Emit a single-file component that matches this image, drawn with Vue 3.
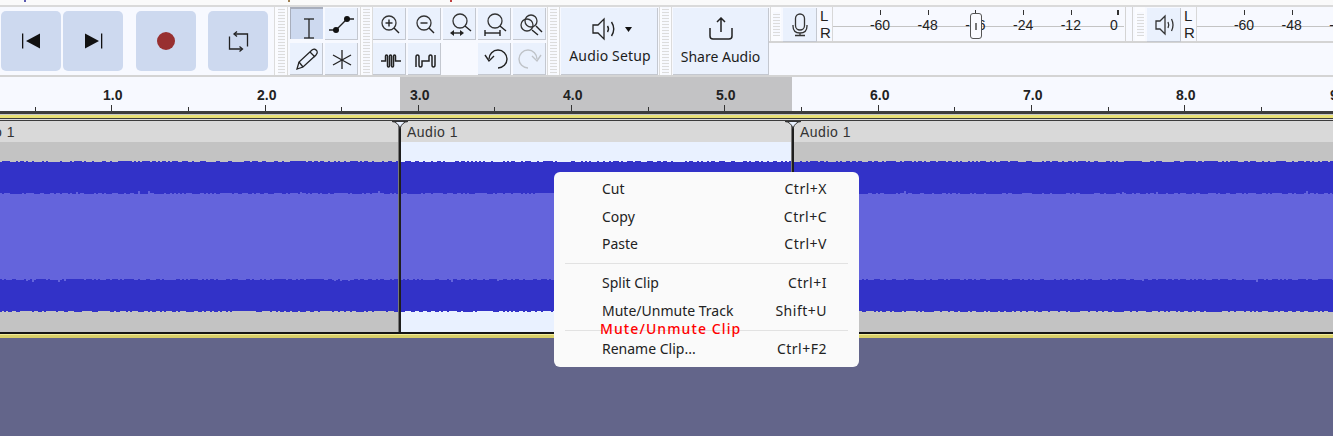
<template>
  <div class="editor">
    <div class="top-strip">
      <i v-for="m in topMarks" :key="m.x" :style="{ left: m.x + 'px', background: m.c }"></i>
    </div>

    <div class="toolbar">
      <div class="transport">
        <button class="big" v-for="b in transport" :key="b.name" :class="b.name">
          <svg width="32" height="32" viewBox="0 0 32 32">
            <path v-for="d in b.fill" :key="d" :d="d" :fill="b.color || '#111'" />
            <path v-for="d in b.stroke" :key="d" :d="d" fill="none" stroke="#222" stroke-width="1.3" />
          </svg>
        </button>
      </div>
      <div class="grip first"></div>

      <div class="tool-grid two">
        <button v-for="t in tools" :key="t.name" class="tool" :class="{ on: t.on }">
          <svg width="32" height="32" viewBox="0 0 32 32">
            <path v-for="d in t.stroke" :key="d" :d="d" fill="none" stroke="#222" stroke-width="1.3" />
            <circle v-for="c in t.dots" :key="c[0]" :cx="c[0]" :cy="c[1]" r="3" fill="#111" />
          </svg>
        </button>
      </div>
      <div class="grip after-tools"></div>

      <div class="tool-grid five">
        <template v-for="t in zoomTools" :key="t.name">
          <div v-if="t.name === 'gap'"></div>
          <button v-else class="tool">
            <svg width="32" height="32" viewBox="0 0 32 32">
              <circle v-for="c in t.rings" :key="c[0]" :cx="c[0]" :cy="c[1]" :r="c[2]" fill="none" stroke="#333" stroke-width="1.3" />
              <path v-for="d in t.stroke" :key="d" :d="d" fill="none" :stroke="t.color || '#222'" :stroke-width="t.sw || 1.4" />
              <path v-for="d in t.fill" :key="d" :d="d" fill="#222" />
            </svg>
          </button>
        </template>
      </div>
      <div class="grip"></div>

      <button class="wide setup">
        <span class="wide-icon">
          <svg width="28" height="24" viewBox="0 0 28 24">
            <path d="M2 8H7L13 2V22L7 16H2Z" fill="none" stroke="#222" stroke-width="1.3" />
            <path d="M16.5 9Q18.5 12 16.5 15M20.5 5Q25 12 20.5 19" fill="none" stroke="#222" stroke-width="1.4" />
          </svg>
          <svg class="caret" width="8" height="6" viewBox="0 0 8 6"><path d="M0 0H7L3.5 5Z" fill="#111" /></svg>
        </span>
        <span>Audio Setup</span>
      </button>
      <div class="grip"></div>

      <button class="wide share">
        <svg width="26" height="24" viewBox="0 0 26 24">
          <path d="M13 1V15M9 5L13 1L17 5" fill="none" stroke="#222" stroke-width="1.5" />
          <path d="M2 11V19Q2 22 5 22H21Q24 22 24 19V11" fill="none" stroke="#222" stroke-width="1.5" />
        </svg>
        <span>Share Audio</span>
      </button>

      <div class="meters">
        <div class="meter-row">
          <div class="grip slim"></div>
          <button class="meter-btn">
            <svg width="34" height="33" viewBox="0 0 34 33">
              <rect x="12.5" y="6" width="9" height="16" rx="4.5" fill="none" stroke="#333" stroke-width="1.3" />
              <path d="M10 17V18Q10 25 17 25Q24 25 24 18V17M17 25V27M12 27.5H22" fill="none" stroke="#333" stroke-width="1.3" />
            </svg>
          </button>
          <div class="lr"><span>L</span><span>R</span></div>
          <div class="meter rec">
            <div class="midline"></div>
            <template v-for="m in recScale" :key="m.label">
              <b class="tick" :class="{ thick: m.label === '0' }" :style="{ left: m.tick + 'px' }"></b>
              <span class="mark" :style="{ left: m.x + 'px' }">{{ m.label }}</span>
            </template>
            <div class="slider"><b></b></div>
          </div>
          <div class="splitter"></div>
          <div class="grip slim second"></div>
          <button class="meter-btn">
            <svg width="34" height="33" viewBox="0 0 34 33">
              <path d="M9 13H13L18 8V26L13 21H9Z" fill="none" stroke="#333" stroke-width="1.3" />
              <path d="M21 14Q22.5 17 21 20M24.5 11Q27.5 17 24.5 23" fill="none" stroke="#333" stroke-width="1.3" />
            </svg>
          </button>
          <div class="lr"><span>L</span><span>R</span></div>
          <div class="meter play">
            <div class="midline"></div>
            <template v-for="m in playScale" :key="m.label">
              <b class="tick" :style="{ left: m.tick + 'px' }"></b>
              <span class="mark" :style="{ left: m.x + 'px' }">{{ m.label }}</span>
            </template>
          </div>
        </div>
      </div>
    </div>

    <div class="ruler">
      <div class="ruler-selection"></div>
      <template v-for="t in rulerTicks" :key="t.x">
        <b class="rtick" :class="{ major: t.label }" :style="{ left: t.x + 'px' }"></b>
        <span v-if="t.label" class="rlabel" :style="{ left: t.x - 8 + 'px' }">{{ t.label }}</span>
      </template>
    </div>

    <div class="track-top"></div>

    <div class="track">
      <div v-for="(c, i) in clips" :key="i" class="clip-wrap">
        <div v-if="i > 0" class="divider"></div>
        <div class="clip" :class="{ selected: c.selected }" :style="{ width: c.w + 'px' }">
          <div class="clip-head"><span :style="{ marginLeft: c.label + 'px' }">Audio 1</span></div>
          <div class="clip-body">
            <svg :width="c.w" height="190" :viewBox="`0 0 ${c.w} 190`" shape-rendering="crispEdges">
              <path :d="c.outer" fill="#3232c8" />
              <path :d="c.inner" fill="#6464dc" />
            </svg>
          </div>
        </div>
      </div>
      <svg v-for="x in [392, 785]" :key="x" class="handle" :style="{ left: x + 'px' }" width="16" height="8" viewBox="0 0 16 8">
        <path d="M0 .5Q6 1 8 7.5Q10 1 16 .5Z" fill="#e9f1ff" stroke="#333" stroke-width="1" />
      </svg>
    </div>

    <div class="track-bottom"></div>
    <div class="empty"></div>

    <div class="menu">
      <template v-for="(item, i) in menuItems" :key="i">
        <div v-if="item.sep" class="sep" :style="{ height: item.sep + 'px' }"></div>
        <div v-else class="row">
          <span>{{ item.label }}</span>
          <span class="shortcut">{{ item.key }}</span>
        </div>
      </template>
      <span class="red-label">Mute/Unmute Clip</span>
    </div>
  </div>
</template>

<script setup>
const topMarks = [
  { x: 24, c: "#5a5ab0" },
  { x: 288, c: "#a08050" },
  { x: 450, c: "#c04040" },
];

const transport = [
  { name: "prev", fill: ["M7 8.5H8.3V23.5H7ZM11 16L25 8.5V23.5Z"] },
  { name: "next", fill: ["M8 8.5L22 16L8 23.5ZM24 8.5H25.3V23.5H24Z"] },
  { name: "rec", color: "#983030", fill: ["M7 16a9 9 0 1 0 18 0a9 9 0 1 0 -18 0Z"] },
  {
    name: "loop",
    stroke: ["M13 9H25.5V21.5", "M20 24H7.5V11.5", "M15 6.5L12 9L15 11.5", "M17.5 21.5L20.5 24L17.5 26.5"],
  },
];

const tools = [
  { name: "select", on: true, stroke: ["M13 10H23", "M18 10V29", "M13 29H23"] },
  { name: "envelope", stroke: ["M4 22H11L22 11H29"], dots: [[11, 22], [22, 11]] },
  {
    name: "draw",
    stroke: ["M7 26L9 19L22 7Q25 5 27 8Q28 10 26 12L13 24Z", "M9 19L13 24", "M20 9L25 14"],
  },
  { name: "multi", stroke: ["M17 7V26", "M8 12L26 22", "M26 12L8 22"] },
];

const zoomTools = [
  { name: "in", rings: [[16, 15, 7]], stroke: ["M21 20L26 25", "M12.5 15H19.5", "M16 11.5V18.5"] },
  { name: "out", rings: [[16, 15, 7]], stroke: ["M21 20L26 25", "M12.5 15H19.5"] },
  {
    name: "fit-sel",
    rings: [[17, 13, 7]],
    stroke: ["M22 18L28 23", "M10 25H18"],
    fill: ["M7 25L11 22V28Z", "M21 25L17 22V28Z"],
  },
  {
    name: "fit-proj",
    rings: [[17, 13, 7]],
    stroke: ["M22 18L28 23", "M7 22V28", "M22 22V28", "M7 25H22"],
  },
  {
    name: "toggle",
    rings: [[14, 17, 6], [18, 13, 6]],
    stroke: ["M23 18L29 24", "M19 22L25 27"],
  },
  {
    name: "trim",
    sw: 1.5,
    stroke: [
      "M8 18H12.5V13Q12.5 12 13.5 12Q14.5 12 14.5 13V23Q14.5 24 15.5 24Q16.5 24 16.5 23V13Q16.5 12 17.5 12Q18.5 12 18.5 13V23Q18.5 24 19.5 24Q20.5 24 20.5 23V13Q20.5 12 21.5 12Q22.5 12 22.5 13V18H28",
    ],
  },
  {
    name: "silence",
    sw: 1.5,
    stroke: [
      "M8 24V14Q8 12 9.5 12Q11 12 11 14V22Q11 24 12.5 24Q14 24 14 22V18H21V14Q21 12 22.5 12Q24 12 24 14V22Q24 24 25.5 24Q27 24 27 22V12",
    ],
  },
  { name: "gap" },
  { name: "undo", stroke: ["M11 16A9 9 0 1 1 20 25", "M7 12L11 18L16 13"] },
  { name: "redo", color: "#bfc3c8", stroke: ["M24 16A9 9 0 1 0 15 25", "M28 12L24 18L19 13"] },
];

const scaleOf = (start, labels) =>
  labels.map((label, i) => ({ label, tick: start + i * 47.7, x: start + i * 47.7 }));

const recScale = [
  ...scaleOf(47, ["-60", "-48", "-36", "-24", "-12"]),
  { label: "0", tick: 284, x: 281 },
];
const playScale = scaleOf(47, ["-60", "-48", "-36"]);

const rulerTicks = [];
for (let i = -1; i < 17; i++) {
  const x = Math.round(111.2 + i * 76.65);
  const label = i >= 0 && i % 2 === 0 ? (i / 2 + 1).toFixed(1) : "";
  rulerTicks.push({ x, label });
}

// fake waveform edges, seeded so every render is the same
const makeEdge = (width, seed, amp, peaks) => {
  let s = seed;
  const out = [];
  for (let x = 0; x <= width; x += 2) {
    s = (Math.imul(s, 1103515245) + 12345) & 0x7fffffff;
    const r = s >>> 16;
    const peak = peaks && r % 41 === 0 ? 2 : 0;
    out.push([x, (r >>> 3) % (amp + 1) + peak]);
  }
  return out;
};

const band = (width, top, bottom, seed, peaks) => {
  const a = makeEdge(width, seed, 1, peaks);
  const b = makeEdge(width, seed + 77, 1, peaks);
  let d = `M0 ${top}`;
  a.forEach(([x, j]) => {
    d += `L${x} ${top - j}L${x + 2} ${top - j}`;
  });
  for (let i = b.length - 1; i >= 0; i--) {
    const [x, j] = b[i];
    d += `L${x + 2} ${bottom + j}L${x} ${bottom + j}`;
  }
  return d + "Z";
};

const clips = [
  { w: 398, label: -36 },
  { w: 390, label: 6, selected: true },
  { w: 539, label: 6 },
].map((c, i) => ({
  ...c,
  outer: band(c.w, 20, 169, 11 + i * 5, false),
  inner: band(c.w, 52, 137, 200 + i * 9, true),
}));

const menuItems = [
  { label: "Cut", key: "Ctrl+X" },
  { label: "Copy", key: "Ctrl+C" },
  { label: "Paste", key: "Ctrl+V" },
  { sep: 11.5 },
  { label: "Split Clip", key: "Ctrl+I" },
  { label: "Mute/Unmute Track", key: "Shift+U" },
  { sep: 11 },
  { label: "Rename Clip...", key: "Ctrl+F2" },
];
</script>

<style>
body {
  margin: 0;
  overflow: hidden;
}
</style>

<style scoped>
.editor {
  position: relative;
  display: flex;
  flex-direction: column;
  width: 1333px;
  height: 436px;
  overflow: hidden;
  font-family: "Liberation Sans", Arial, sans-serif;
  background: #63658a;
}

button {
  padding: 0;
  margin: 0;
  font: inherit;
  color: inherit;
}

svg {
  display: block;
}

.top-strip {
  position: relative;
  flex: none;
  height: 5px;
  background: #fafafa;
  border-bottom: 2px solid #dadada;
}

.top-strip i {
  position: absolute;
  top: 0;
  width: 2px;
  height: 2px;
}

.toolbar {
  flex: none;
  display: flex;
  height: 68px;
  background: #f7f9ff;
  border-bottom: 2px solid #d4d4d4;
}

.transport {
  display: flex;
  align-items: center;
  padding-left: 1px;
}

.big {
  display: flex;
  align-items: center;
  justify-content: center;
  width: 60px;
  height: 60px;
  border: 0;
  border-radius: 5px;
  background: #cdd9ef;
}

.big.next {
  margin-left: 2px;
}

.big.rec {
  margin-left: 13px;
}

.big.loop {
  margin-left: 12px;
}

.grip {
  flex: none;
  width: 11px;
  margin-left: 1px;
  border-left: 1px solid #dcdcdc;
  border-right: 1px solid #dcdcdc;
  background: repeating-linear-gradient(#f7f9ff 0 2px, #dcdcdc 2px 3px) center / 7px 100% no-repeat #fbfcff;
}

.grip.first {
  width: 12px;
  margin-left: 6px;
  margin-right: 2px;
}

.grip.after-tools {
  margin-left: 2px;
}

.tool-grid {
  display: grid;
  grid-template-rows: 32px 32px;
  gap: 3px 2px;
  align-self: flex-end;
}

.tool-grid.two {
  grid-template-columns: repeat(2, 33px);
}

.tool-grid.five {
  grid-template-columns: repeat(5, 33px);
}

.tool {
  width: 33px;
  height: 32px;
  border: 0;
  border-right: 1px solid #c4c8d0;
  border-bottom: 1px solid #c4c8d0;
  background: #eaf1fd;
}

.tool.on {
  margin-top: -1px;
  border: 0;
  border-top: 2px solid #a8aebc;
  border-left: 1px solid #a8aebc;
  background: #cdd9ef;
}

.wide {
  flex: none;
  display: flex;
  flex-direction: column;
  align-items: center;
  align-self: flex-end;
  height: 67px;
  margin-left: 1px;
  border: 0;
  border-right: 1px solid #c4c8d0;
  border-bottom: 1px solid #c4c8d0;
  background: #eaf1fd;
  font-family: "Noto Sans", sans-serif;
  font-size: 14px;
  line-height: 20px;
  color: #1c1c1c;
}

.setup {
  width: 97px;
  padding-top: 9px;
  padding-left: 2px;
  gap: 5px;
  letter-spacing: 0.15px;
}

.share {
  width: 96px;
  padding-top: 9px;
  gap: 6px;
}

.wide-icon {
  display: flex;
  align-items: center;
  gap: 6px;
  margin-left: 4px;
}

.caret {
  margin-top: 2px;
}

.meters {
  flex: 1;
  min-width: 0;
}

.meter-row {
  display: flex;
  height: 34px;
  border-bottom: 2px solid #d4d4d4;
}

.grip.slim {
  width: 10px;
  margin-left: 1px;
  margin-right: 2px;
  border-right: 0;
  background-size: 7px 24px;
}

.grip.second {
  margin-left: 1px;
  margin-right: 2px;
  border-left: 0;
}

.meter-btn {
  flex: none;
  width: 34px;
  height: 34px;
  margin-top: 1px;
  border: 0;
  border-right: 1px solid #c4c8d0;
  border-bottom: 1px solid #c4c8d0;
  background: #eaf1fd;
}

.lr {
  flex: none;
  display: flex;
  flex-direction: column;
  justify-content: space-around;
  width: 14px;
  padding-left: 1px;
  font-size: 15px;
  line-height: 17px;
  color: #222;
  text-indent: 2px;
}

.meter {
  position: relative;
  border-left: 1px solid #d8d8d8;
  overflow: hidden;
}

.meter.rec {
  width: 291px;
  flex: none;
}

.meter.play {
  flex: 1;
}

.splitter {
  flex: none;
  width: 6px;
  margin: 0 1px;
  border-left: 1px solid #d4d4d4;
  border-right: 1px solid #d4d4d4;
}

.midline {
  position: absolute;
  left: 0;
  right: 0;
  top: 19px;
  height: 1px;
  background: #c4c4c4;
}

.tick {
  position: absolute;
  top: 3px;
  width: 1px;
  height: 5px;
  background: #333;
}

.tick.thick {
  width: 2px;
}

.mark {
  position: absolute;
  top: 10px;
  transform: translateX(-50%);
  font-size: 14px;
  line-height: 16px;
  color: #222;
  white-space: nowrap;
}

.slider {
  position: absolute;
  left: 137px;
  top: 6px;
  display: flex;
  align-items: center;
  justify-content: center;
  width: 10px;
  height: 24px;
  border: 1px solid #555;
  border-radius: 3px;
  background: #fafbff;
}

.slider b {
  width: 2px;
  height: 7px;
  background: #777;
}

.ruler {
  position: relative;
  flex: none;
  height: 34px;
  background: #f7f9ff;
}

.ruler-selection {
  position: absolute;
  left: 400px;
  top: 0;
  bottom: 0;
  width: 392px;
  background: #c3c3c5;
}

.rtick {
  position: absolute;
  bottom: 0;
  width: 1px;
  height: 4px;
  background: #333;
}

.rtick.major {
  height: 6px;
}

.rlabel {
  position: absolute;
  top: 10px;
  font-size: 14px;
  font-weight: bold;
  line-height: 16px;
  color: #222;
}

.track-top {
  flex: none;
  height: 10px;
  background: linear-gradient(
    #3c3c3c 0 3px,
    #c8c8c8 3px 4px,
    #e9e177 4px 7px,
    #3c3c3c 7px 8px,
    #dcdcdc 8px 9px,
    #3c3c3c 9px 10px
  );
}

.track {
  position: relative;
  flex: none;
  display: flex;
  height: 211px;
}

.clip-wrap {
  display: flex;
  flex: none;
}

.divider {
  flex: none;
  width: 3px;
  background: linear-gradient(90deg, #777 0 1px, #1e1e1e 1px 3px);
}

.clip {
  display: flex;
  flex-direction: column;
  overflow: hidden;
}

.clip-head {
  height: 21px;
  background: #d9d9d9;
  font-size: 14px;
  line-height: 22px;
  letter-spacing: 0.5px;
  color: #333;
  white-space: nowrap;
}

.clip-head span {
  display: inline-block;
}

.clip-body {
  height: 190px;
  background: #c3c3c3;
}

.clip.selected .clip-body {
  background: #e9f1ff;
}

.handle {
  position: absolute;
  top: 0;
}

.track-bottom {
  flex: none;
  height: 6px;
  background: linear-gradient(#141414 0 2px, #f0ea9a 2px 3px, #d8cf68 3px 6px);
}

.empty {
  flex: 1;
  background: #63658a;
}

.menu {
  position: absolute;
  left: 554px;
  top: 172px;
  width: 305px;
  box-sizing: border-box;
  padding: 3px 0 4px;
  border-radius: 6px;
  background: #fafafa;
  font-family: "Noto Sans", sans-serif;
  font-size: 14px;
  color: #222;
}

.row {
  display: flex;
  justify-content: space-between;
  height: 27.5px;
  padding: 0 32px 0 48px;
  line-height: 27.5px;
}

.shortcut {
  letter-spacing: 0.5px;
}

.sep {
  position: relative;
}

.sep::after {
  content: "";
  position: absolute;
  left: 11px;
  right: 11px;
  top: 50%;
  height: 1px;
  background: #e2e2e2;
}

.red-label {
  position: absolute;
  left: 46px;
  top: 147px;
  font-size: 14px;
  font-weight: 500;
  line-height: 20px;
  letter-spacing: 1.1px;
  color: #ff0000;
  white-space: nowrap;
}
</style>
